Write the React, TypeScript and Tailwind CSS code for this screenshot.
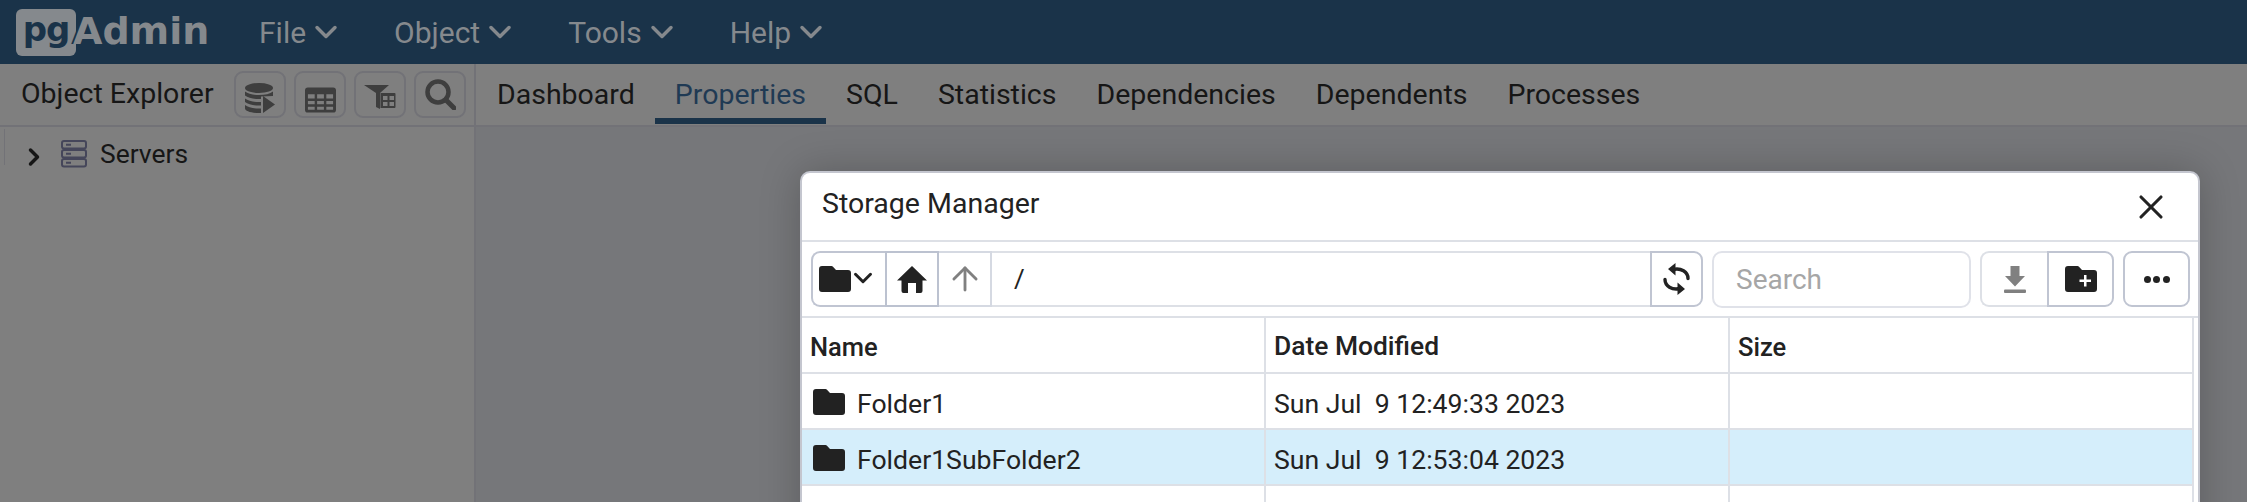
import { ChevronDown, ChevronRight, X, ArrowUp } from "lucide-react";
import type { ReactNode } from "react";

const Folder = ({ className = "" }: { className?: string }) => (
  <svg viewBox="0 0 32 26" className={className} fill="#222222">
    <path d="M3 0h9.500a2 2 0 0 1 1.500.7L17 4h12a3 3 0 0 1 3 3v16a3 3 0 0 1-3 3H3a3 3 0 0 1-3-3V3a3 3 0 0 1 3-3z" />
  </svg>
);

const tabs = ["Dashboard", "Properties", "SQL", "Statistics", "Dependencies", "Dependents", "Processes"];

const ToolBtn = ({ children }: { children: ReactNode }) => (
  <div className="w-[52px] h-[47px] rounded-[9px] border-2 border-[#727277] flex items-center justify-center">{children}</div>
);

const rows = [
  { name: "Folder1", date: "Sun Jul  9 12:49:33 2023", selected: false },
  { name: "Folder1SubFolder2", date: "Sun Jul  9 12:53:04 2023", selected: true },
];

export default function App() {
  return (
    <div className="relative w-[2247px] h-[502px] overflow-hidden bg-[#76777a] text-[#222222]" style={{ fontFamily: "Roboto, sans-serif" }}>
      <header className="h-[64px] bg-[#1a3349] flex items-center text-[#85898d]">
        <div className="ml-[16px] w-[192px] h-[47px] flex items-center" style={{ fontFamily: '"DejaVu Sans", sans-serif' }}>
          <div className="w-[60px] h-[47px] rounded-[6px] bg-[#85898d] flex items-center justify-center shrink-0">
            <span className="text-[#1a3349] text-[34px] font-bold leading-none pb-[6px] tracking-[-1px]">pg</span>
          </div>
          <span className="text-[#85898d] text-[38px] font-bold leading-none -ml-[3px] -mt-[2px] [text-shadow:-2px_0_0_#1a3349]">Admin</span>
        </div>
        <nav className="flex items-center ml-[51px] gap-[50px] text-[30px]">
          {["File", "Object", "Tools", "Help"].map((m) => (
            <div key={m} className="flex items-center">
              <span>{m}</span>
              <ChevronDown size={36} strokeWidth={2.3} className="ml-[2px]" />
            </div>
          ))}
        </nav>
      </header>

      <div className="flex h-[438px]">
        <aside className="w-[476px] shrink-0 border-r-2 border-r-[#727277] bg-[#7f7f7f]">
          <div className="h-[63px] border-b-2 border-b-[#727277] flex items-center pl-[21px]">
            <span className="text-[28.5px] text-[#161616] w-[213px] whitespace-nowrap">Object Explorer</span>
            <div className="flex gap-[8px]">
              <ToolBtn>
                <svg viewBox="0 0 30 30" className="w-[30px] h-[30px] mt-[6px]" fill="#3e3e3e">
                  <ellipse cx="14" cy="5" rx="14" ry="5" />
                  <path d="M0 8.500C3 11 8 12 14 12s11-1 14-3.500V13l-12 .5v2.500c-.8.100-1.300.100-2 .100-6 0-11-1.200-14-3.500zM0 15.500C3 18 8 19 14 19h2v3.500h-2c-6 0-11-1.200-14-3.500zM0 22c3 2.500 8 3.500 14 3.500h2V30h-2C6 30 0 28 0 25.500z" />
                  <path d="M18 13l12 8.500L18 30z" />
                </svg>
              </ToolBtn>
              <ToolBtn>
                <svg viewBox="0 0 32 26" className="w-[31px] h-[26px] mt-[10px]" fill="#3e3e3e">
                  <path fillRule="evenodd" d="M3 0h26a3 3 0 0 1 3 3v20a3 3 0 0 1-3 3H3a3 3 0 0 1-3-3V3a3 3 0 0 1 3-3zM3 7v4.500h7V7zm9.500 0v4.500h7V7zm9.500 0v4.500h7V7zM3 14v3.500h7V14zm9.500 0v3.500h7V14zm9.500 0v3.500h7V14zM3 20v3h7v-3zm9.500 0v3h7v-3zm9.500 0v3h7v-3z" />
                </svg>
              </ToolBtn>
              <ToolBtn>
                <svg viewBox="0 0 32 24" className="w-[32px] h-[24px] mt-[4px]" fill="#3e3e3e">
                  <path d="M0 0h25l-9 8v16l-4-2V8z" />
                  <path fillRule="evenodd" d="M16.500 8h14a1 1 0 0 1 1 1v13a1 1 0 0 1-1 1h-14zm2.500 3v4h4.500v-4zm6.500 0v4H30v-4zM19 17v4h4.500v-4zm6.500 0v4H30v-4z" />
                </svg>
              </ToolBtn>
              <ToolBtn>
                <svg viewBox="0 0 31 31" className="w-[31px] h-[31px]" fill="none" stroke="#3e3e3e">
                  <circle cx="13" cy="13" r="10.500" strokeWidth="4.500" />
                  <path d="M21 21l8 8" strokeWidth="5" strokeLinecap="round" />
                </svg>
              </ToolBtn>
            </div>
          </div>
          <div className="flex items-center h-[58px] relative pb-[4px]">
            <div className="absolute left-[4px] top-[2px] h-[36px] w-px bg-[#727277]" />
            <ChevronRight size={28} strokeWidth={3} color="#161616" className="ml-[20px] mt-[5px]" />
            <svg viewBox="0 0 26 28" className="w-[26px] h-[28px] ml-[13px]" fill="none" stroke="#45465a" strokeWidth="2">
              <rect x="1" y="1" width="24" height="7.500" rx="2" />
              <rect x="1" y="10" width="24" height="7.500" rx="2" />
              <rect x="1" y="19" width="24" height="7.500" rx="2" />
              <path d="M5 4.800h5M5 13.800h5M5 22.800h5" />
            </svg>
            <span className="text-[26.4px] text-[#161616] ml-[13px] pt-[1px]">Servers</span>
          </div>
        </aside>

        <main className="flex-1 flex flex-col">
          <div className="h-[63px] bg-[#7f7f7f] border-b-2 border-b-[#727277] flex items-stretch pl-[1px] text-[28.5px]">
            {tabs.map((t) => (
              <div
                key={t}
                className={
                  "px-[20px] h-[60px] flex items-center pt-[8px] border-b-[6px] " +
                  (t === "Properties" ? "text-[#1f3a54] border-b-[#1a3349]" : "text-[#161616] border-b-transparent")
                }
              >
                {t}
              </div>
            ))}
          </div>
        </main>
      </div>

      <section className="absolute left-[800px] top-[171px] w-[1400px] h-[400px] bg-white rounded-t-[10px] border-2 border-[#c4c6cf] border-b-0 shadow-[0_0_40px_rgba(0,0,0,0.22)] flex flex-col">
        <div className="h-[69px] shrink-0 border-b-2 border-b-[#dde0e6] flex items-center justify-between pl-[20px] pr-[27px]">
          <span className="text-[28.5px] -mt-[4px]">Storage Manager</span>
          <X size={40} strokeWidth={1.9} color="#222222" className="ml-[1px]" />
        </div>

        <div className="h-[76px] shrink-0 border-b-2 border-b-[#dde0e6] flex items-start pt-[9px] pl-[9px] gap-[9px]">
          <div className="flex h-[56px]">
            <div className="w-[74px] h-[56px] rounded-l-[9px] border-2 border-[#c0c5d2] border-r-0 flex items-center pl-[6px]">
              <Folder className="w-[32px] h-[26px] shrink-0" />
              <ChevronDown size={30} strokeWidth={2.4} color="#222222" className="-ml-[3px] -mt-[2px] shrink-0" />
            </div>
            <div className="w-[54px] h-[56px] border-2 border-[#bcc2d0] flex items-center justify-center">
              <svg viewBox="0 0 30 27" className="w-[30px] h-[27px]" fill="#222222">
                <path d="M15 0L30 14.500H25.500V25a2 2 0 0 1-2 2H19V17h-8v10H6.500a2 2 0 0 1-2-2V14.500H0z" />
              </svg>
            </div>
            <div className="w-[53px] h-[56px] border-y-2 border-r-2 border-[#d5d9e2] flex items-center justify-center">
              <ArrowUp size={38} strokeWidth={1.8} color="#808080" />
            </div>
            <div className="w-[658px] h-[56px] border-y-2 border-[#dde0e6] pl-[22px] flex items-center text-[26px]">/</div>
            <div className="w-[53px] h-[56px] rounded-r-[9px] border-2 border-[#c0c5d2] flex items-center justify-center">
              <svg viewBox="0 0 27 32" className="w-[27px] h-[32px]" fill="none" stroke="#222222" strokeWidth="3.400">
                <path d="M10 6.500C18 4.500 25 9 25 15.500" strokeLinecap="round" />
                <path d="M17 25.500C9 27.500 2 23 2 16.500" strokeLinecap="round" />
                <path d="M12.500 0L5 6l7.500 6.500zM14.500 32l7.500-6-7.500-6.500z" fill="#222222" stroke="none" />
              </svg>
            </div>
          </div>

          <div className="w-[259px] h-[57px] rounded-[10px] border-2 border-[#e0e2e9] flex items-center pl-[22px] pt-[1px] text-[28px] text-[#a6a6a6]">Search</div>

          <div className="flex h-[56px]">
            <div className="w-[67px] rounded-l-[9px] border-2 border-r-0 border-[#dde0e6] flex items-center justify-center">
              <svg viewBox="0 0 22 27" className="w-[22px] h-[27px]" fill="#808080">
                <path d="M6.500 0h9v10H21L11 20.500 1 10h5.500z" />
                <rect x="0" y="23.500" width="22" height="3.500" rx="1" />
              </svg>
            </div>
            <div className="w-[67px] rounded-r-[9px] border-2 border-[#c0c5d2] flex items-center justify-center">
              <svg viewBox="0 0 32 26" className="w-[32px] h-[26px]">
                <path fill="#222222" d="M3 0h9.500a2 2 0 0 1 1.500.7L17 4h12a3 3 0 0 1 3 3v16a3 3 0 0 1-3 3H3a3 3 0 0 1-3-3V3a3 3 0 0 1 3-3z" />
                <path fill="#ffffff" d="M19 9h2.500v4.500H26V16h-4.500v4.500H19V16h-4.500v-2.500H19z" />
              </svg>
            </div>
          </div>

          <div className="w-[67px] h-[56px] rounded-[9px] border-2 border-[#c0c5d2] flex items-center justify-center gap-[2.5px]">
            <div className="w-[7px] h-[7px] rounded-full bg-[#222222]" />
            <div className="w-[7px] h-[7px] rounded-full bg-[#222222]" />
            <div className="w-[7px] h-[7px] rounded-full bg-[#222222]" />
          </div>
        </div>

        <div className="flex flex-col pr-[4px]">
          <div className="grid grid-cols-[464px_464px_1fr] h-[56px] border-b-2 border-b-[#dde0e6] font-medium text-[25.5px] text-[#222222]">
            <div className="pl-[8px] pt-[4px] flex items-center border-r-2 border-r-[#dde0e6]">Name</div>
            <div className="pl-[8px] pt-[4px] flex items-center border-r-2 border-r-[#dde0e6] text-[26.4px]">Date Modified</div>
            <div className="pl-[8px] pt-[4px] flex items-center border-r-2 border-r-[#dde0e6]">Size</div>
          </div>
          {rows.map((r) => (
            <div
              key={r.name}
              className={"grid grid-cols-[464px_464px_1fr] h-[56px] border-b-2 border-b-[#dde0e6] text-[26.6px] " + (r.selected ? "bg-[#d5eefb]" : "")}
            >
              <div className="pl-[11px] flex items-center gap-[12px] border-r-2 border-r-[#dde0e6]">
                <Folder className="w-[32px] h-[26px] mt-[2px]" />
                <span className="pt-[5px]">{r.name}</span>
              </div>
              <div className="pl-[8px] pt-[5px] flex items-center border-r-2 border-r-[#dde0e6] whitespace-pre">{r.date}</div>
              <div className="border-r-2 border-r-[#dde0e6]" />
            </div>
          ))}
          <div className="grid grid-cols-[464px_464px_1fr] h-[40px]">
            <div className="border-r-2 border-r-[#dde0e6]" />
            <div className="border-r-2 border-r-[#dde0e6]" />
            <div className="border-r-2 border-r-[#dde0e6]" />
          </div>
        </div>
      </section>
    </div>
  );
}
